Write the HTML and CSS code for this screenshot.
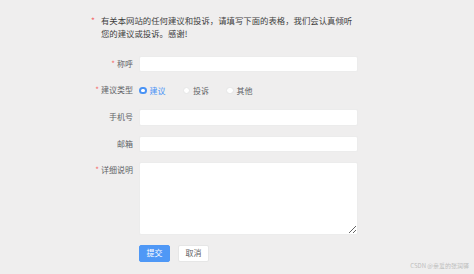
FILE: index.html
```html
<!DOCTYPE html>
<html lang="zh-CN">
<head>
<meta charset="utf-8">
<link rel="stylesheet" href="styles.css">
</head>
<body>
<div class="page">
  <div class="intro">
    <span class="star">*</span>
    <p class="intro-text">有关本网站的任何建议和投诉，请填写下面的表格，我们会认真倾听您的建议或投诉。感谢!</p>
  </div>
  <form class="form">
    <div class="row">
      <label class="label"><span class="req">*</span>称呼</label>
      <input class="input" type="text">
    </div>
    <div class="row">
      <label class="label"><span class="req">*</span>建议类型</label>
      <div class="radios">
        <span class="radio checked"><span class="dot"></span>建议</span>
        <span class="radio"><span class="dot"></span>投诉</span>
        <span class="radio"><span class="dot"></span>其他</span>
      </div>
    </div>
    <div class="row">
      <label class="label">手机号</label>
      <input class="input" type="text">
    </div>
    <div class="row">
      <label class="label">邮箱</label>
      <input class="input" type="text">
    </div>
    <div class="row row-top">
      <label class="label"><span class="req">*</span>详细说明</label>
      <textarea class="textarea"></textarea>
    </div>
    <div class="row">
      <span class="label"></span>
      <div class="buttons">
        <button type="button" class="btn btn-primary">提交</button>
        <button type="button" class="btn">取消</button>
      </div>
    </div>
  </form>
</div>
<div class="watermark">CSDN @亲爱的张润驿</div>
</body>
</html>
```
FILE: styles.css
```css
html, body {
  margin: 0;
  padding: 0;
  background: #efeeee;
  height: 274px;
  overflow: hidden;
}
body {
  font-family: "Noto Sans CJK SC", "Noto Sans", sans-serif;
  color: #606266;
  position: relative;
}
.page {
  padding: 14px 0 0 91px;
}
.intro {
  display: flex;
}
.star {
  width: 10px;
  color: #f56c6c;
  font-size: 8.4px;
  line-height: 12.6px;
}
.intro-text {
  margin: 0;
  width: 256px;
  font-size: 8.4px;
  line-height: 12.6px;
  color: #3f3f3f;
}
.form {
  margin-top: 16.5px;
}
.row {
  display: flex;
  align-items: center;
  margin-bottom: 10.2px;
}
.row-top {
  align-items: flex-start;
}
.label {
  width: 42px;
  flex: none;
  padding-right: 6px;
  text-align: right;
  font-size: 8px;
  line-height: 16.5px;
  color: #606266;
  white-space: nowrap;
}
.req {
  color: #f56c6c;
  margin-right: 2px;
}
.input {
  box-sizing: border-box;
  width: 219px;
  height: 16.5px;
  margin: 0;
  padding: 0 5px;
  border: 1px solid #ececec;
  border-radius: 2px;
  background: #fff;
  outline: none;
}
.textarea {
  box-sizing: border-box;
  width: 219px;
  height: 72.5px;
  margin: 0;
  padding: 3px 5px;
  border: 1px solid #ececec;
  border-radius: 2px;
  background: #fff;
  outline: none;
  resize: both;
  display: block;
}
.radios {
  display: flex;
  align-items: center;
  gap: 17px;
  height: 16.5px;
}
.radio {
  display: flex;
  align-items: center;
  gap: 3px;
  font-size: 8px;
  color: #606266;
}
.radio.checked {
  color: #4a93f5;
}
.dot {
  box-sizing: border-box;
  width: 7.5px;
  height: 7.5px;
  border-radius: 50%;
  border: 1px solid #e6e6e6;
  background: #fff;
}
.radio.checked .dot {
  border: 2.3px solid #4a93f5;
  background: #fff;
}
.buttons {
  display: flex;
  gap: 8px;
}
.btn {
  box-sizing: border-box;
  width: 31px;
  height: 16.5px;
  margin: 0;
  padding: 0;
  border: 1px solid #e6e6e6;
  border-radius: 2px;
  background: #fff;
  color: #606266;
  font-family: "Noto Sans CJK SC", "Noto Sans", sans-serif;
  font-size: 8px;
  line-height: 14px;
}
.btn-primary {
  background: #4f98f6;
  border-color: #4f98f6;
  color: #fff;
}
.watermark {
  position: absolute;
  right: 5px;
  top: 262px;
  font-size: 6px;
  line-height: 8px;
  color: #bdbdbd;
  white-space: nowrap;
}
```
